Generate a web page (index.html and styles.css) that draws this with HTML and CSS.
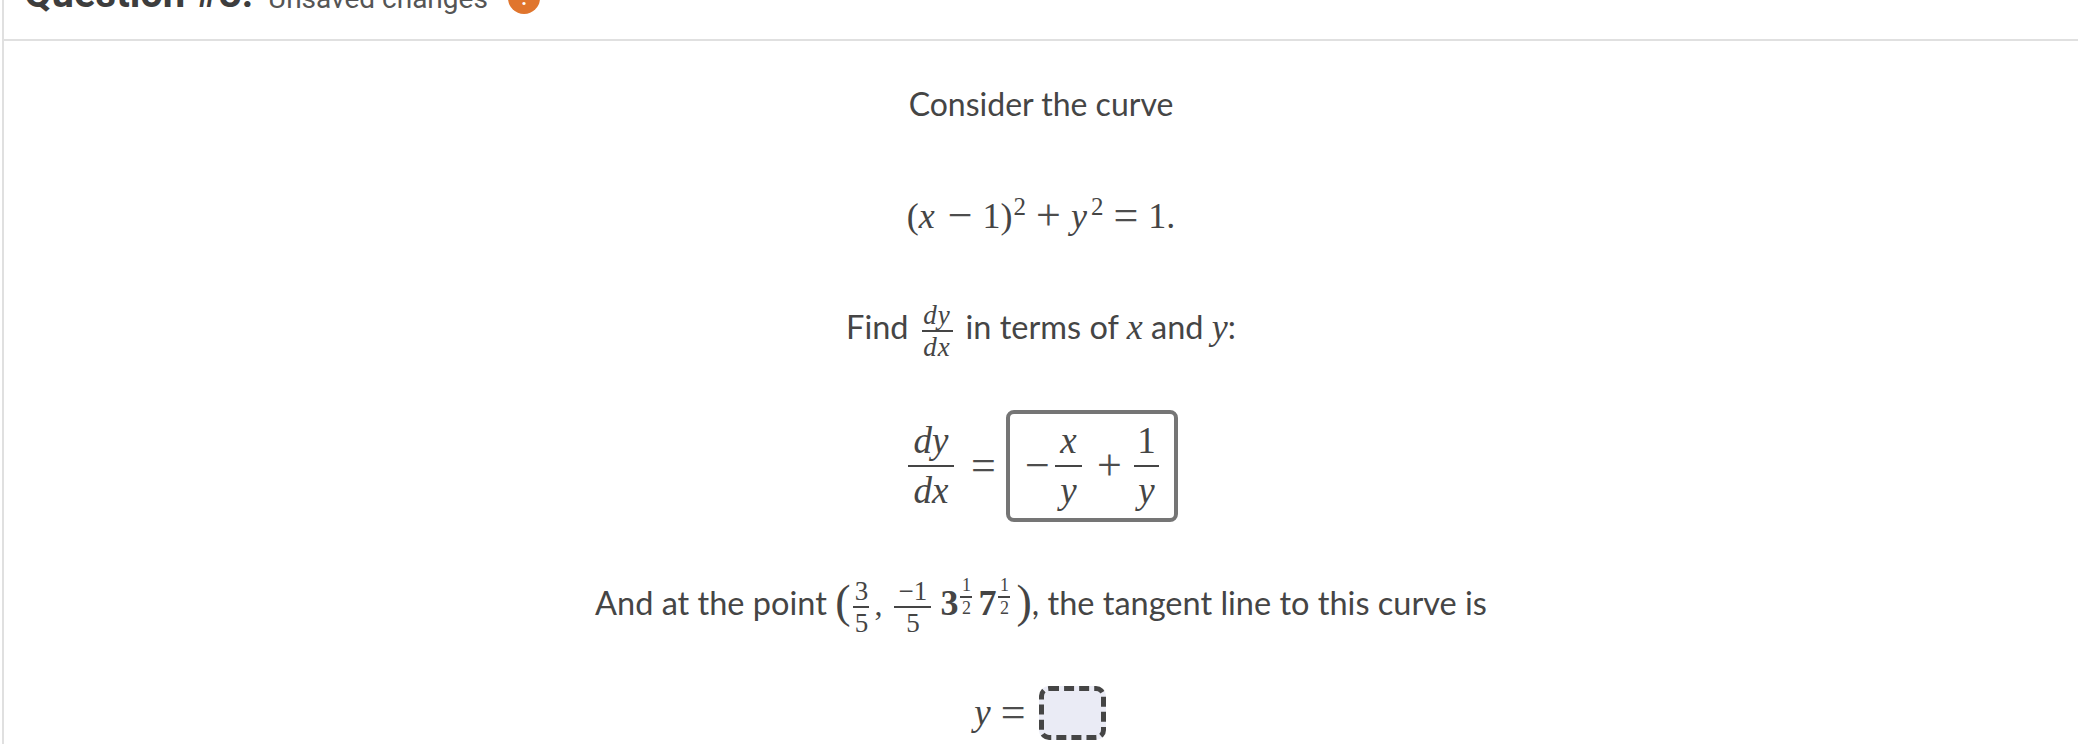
FILE: index.html
```html
<!DOCTYPE html>
<html lang="en">
<head>
<meta charset="utf-8">
<title>Question 3</title>
<link rel="stylesheet" href="styles.css">
</head>
<body>
<div class="frame">
  <header class="head">
    <span class="qtitle">Question #3:</span>
    <span class="unsaved">Unsaved changes</span>
    <span class="badge">!</span>
  </header>
  <main class="body">
    <p class="row r1">Consider the curve</p>
    <p class="row r2 math">(<i>x</i><span class="op">−</span>1)<sup>2</sup><span class="op">+</span><i>y</i><sup>2</sup><span class="op">=</span>1.</p>
    <p class="row r3">Find<span class="frac small gapx math"><span class="num"><i>dy</i></span><span class="den"><i>dx</i></span></span>in terms of <i class="math var">x</i> and <i class="math var">y</i>:</p>
    <div class="row r4 math">
      <span class="frac large"><span class="num"><i>dy</i></span><span class="den"><i>dx</i></span></span>
      <span class="op eq">=</span>
      <span class="answer">
        <span class="op">−</span>
        <span class="frac large tight"><span class="num"><i>x</i></span><span class="den"><i>y</i></span></span>
        <span class="op">+</span>
        <span class="frac large tight"><span class="num">1</span><span class="den"><i>y</i></span></span>
      </span>
    </div>
    <p class="row r5">And at the point <span class="math paren">(</span><span class="frac small math f35"><span class="num">3</span><span class="den">5</span></span><span class="math comma">,</span><span class="frac small math fm15"><span class="num">−1</span><span class="den">5</span></span><span class="math base">3</span><span class="frac tiny math"><span class="num">1</span><span class="den">2</span></span><span class="math base">7</span><span class="frac tiny math"><span class="num">1</span><span class="den">2</span></span><span class="math paren">)</span>, the tangent line to this curve is</p>
    <div class="row r6 math"><i>y</i><span class="op eq">=</span><span class="blank"></span></div>
  </main>
</div>
</body>
</html>
```
FILE: styles.css
```css
* { box-sizing: border-box; }
html, body { margin: 0; height: 744px; overflow: hidden; background: #fff; }
body { font-family: Lato, "Noto Sans", sans-serif; color: #454545; }
.frame { margin-left: 2px; border-left: 2px solid #e0e0e0; height: 744px; }
.head {
  height: 41px;
  border-bottom: 2px solid #e0e0e0;
  display: flex;
  align-items: flex-end;
  padding: 0 0 26px 20px;
  white-space: nowrap;
}
.qtitle { font: 700 40px/38px Roboto, sans-serif; color: #3d3d3d; width: 244px; }
.unsaved { font: 400 28px/28px Roboto, sans-serif; color: #555; width: 240px; }
.badge {
  width: 32px; height: 32px; border-radius: 50%;
  background: #e0752d; color: #fff; font: 700 20px/32px Roboto, sans-serif;
  text-align: center; flex: none; margin-bottom: -1px;
}
.body { display: flex; flex-direction: column; align-items: center; }
.row { margin: 0; font-size: 32.5px; line-height: 40px; white-space: nowrap; display: flex; align-items: center; justify-content: center; height: 40px; }
p.row { display: block; text-align: center; }
.math { font-family: "Liberation Serif", serif; }
.op { font-size: 44px; line-height: 0; font-style: normal; color: #4d4d4d; vertical-align: -2px; }
.r1 { margin-top: 43px; font-size: 32px; }
.r2 { margin-top: 72px; font-size: 36px; }
.r2 sup { font-size: 25px; line-height: 0; vertical-align: 13px; margin-left: 1px; }
.r2 .op { margin: 0 10px; }
.r2 i { letter-spacing: 3px; }
.r3 { margin-top: 64px; }
.r3 .var { font-size: 36px; }
.frac { display: inline-flex; flex-direction: column; align-items: stretch; vertical-align: middle; }
.frac .num { border-bottom: 2px solid #454545; text-align: center; }
.frac .den { text-align: center; }
.frac.small { font-size: 27px; line-height: 30px; }
.gapx { width: 31px; margin: 0 13px 0 13px; letter-spacing: 1px; line-height: 36px; }
.frac.large { font-size: 37px; line-height: 48px; width: 46px; }
.frac.large.tight { width: 27px; }
.frac.large.tight:last-child { width: 25px; }
.r4 { margin-top: 70px; height: 112px; padding-left: 4px; }
.r4 .eq { margin: 0 17px 0 17px; width: 23px; text-align: center; }
.answer {
  width: 172px; height: 112px; margin-left: -5px;
  border: 4px solid #757575; border-radius: 8px;
  display: flex; align-items: center; padding-left: 15px;
}
.answer .op { width: 23px; text-align: center; margin-right: 7px; }
.answer .frac + .op { margin: 0 14px 0 15px; }
.r5 { margin-top: 50px; height: 60px; line-height: 60px; }
.r5 .paren { font-size: 46px; margin: 0 3px 0 0; vertical-align: -2px; }
.r5 .paren:last-of-type { margin: 0; }
.r5 .comma { font-size: 32px; margin: 0 12px 0 5px; }
.r5 .base { font-size: 36px; font-weight: 700; }
.f35 { width: 16px; }
.fm15 { width: 37px; margin-right: 9px; font-size: 25px; }
.frac.tiny { font-size: 18px; line-height: 21px; width: 12px; margin: -30px 6px 0 2px; vertical-align: 24px; }
.r6 { margin-top: 54px; height: 54px; font-size: 37px; padding-right: 2px; }
.r6 .eq { margin: 0 13px 0 10px; }
.blank { width: 67px; height: 54px; background: #eaebf5; border: 5px dashed #454545; border-radius: 10px; }
```
